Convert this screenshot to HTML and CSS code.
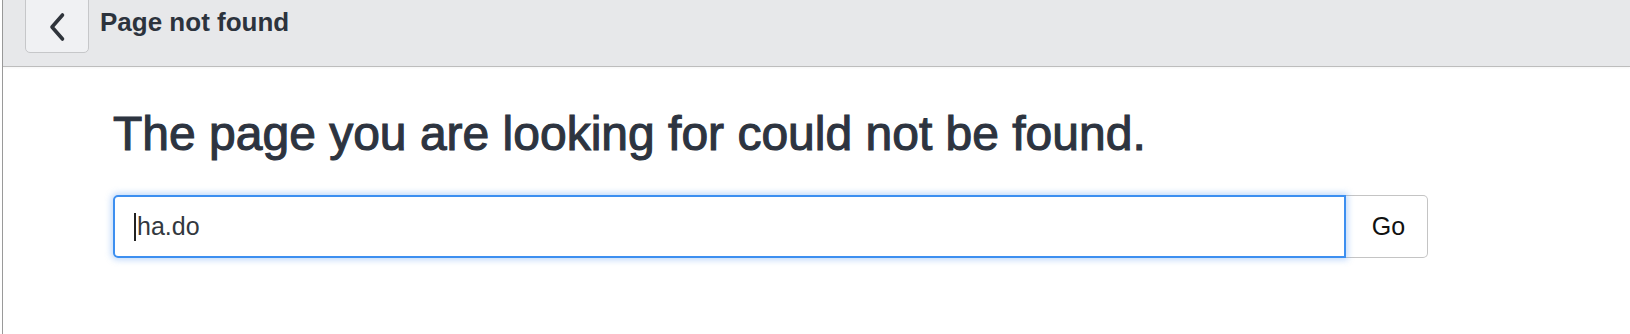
FILE: index.html
```html
<!DOCTYPE html>
<html>
<head>
<meta charset="utf-8">
<link rel="stylesheet" href="styles.css">
</head>
<body>
<div class="frame">
  <header class="topbar">
    <button class="back" aria-label="Back">
      <svg width="18" height="30" viewBox="0 0 18 30"><path d="M14.5 3 L4 15 L14.5 27" fill="none" stroke="#2f343b" stroke-width="3.6" stroke-linecap="round" stroke-linejoin="round"/></svg>
    </button>
    <span class="topbar-title">Page not found</span>
  </header>
  <main class="content">
    <h1 class="headline">The page you are looking for could not be found.</h1>
    <form class="search">
      <div class="search-field"><span class="caret"></span>ha.do</div>
      <button type="button" class="go">Go</button>
    </form>
  </main>
</div>
</body>
</html>
```
FILE: styles.css
```css
html, body {
  margin: 0;
  padding: 0;
  background: #fff;
  font-family: "Liberation Sans", Arial, sans-serif;
}
.frame {
  margin-left: 2px;
  border-left: 1px solid #9a9a9a;
  height: 334px;
  box-sizing: border-box;
}
.topbar {
  height: 66px;
  background: #e7e8ea;
  border-bottom: 1px solid #bdbdbd;
  box-shadow: 0 1px 2px rgba(0,0,0,0.04);
  display: flex;
  align-items: flex-start;
}
.back {
  margin-left: 22px;
  margin-top: -8px;
  width: 64px;
  height: 61px;
  background: #f0f1f3;
  border: 1px solid #c6c7c9;
  border-radius: 5px;
  display: flex;
  align-items: center;
  justify-content: center;
  padding: 8px 0 0 0;
  box-sizing: border-box;
}
.topbar-title {
  margin-left: 11px;
  margin-top: 8px;
  font-size: 26px;
  font-weight: bold;
  color: #2c333d;
  line-height: 29px;
}
.content {
  padding-left: 110px;
  width: 1315px;
}
.headline {
  margin: 40px 0 0 0;
  font-size: 48px;
  line-height: 53px;
  font-weight: normal;
  color: #2d3440;
  -webkit-text-stroke: 1.1px #2d3440;
  letter-spacing: 0;
}
.search {
  margin-top: 35px;
  display: flex;
  height: 63px;
}
.search-field {
  flex: 1;
  border: 2px solid #3d8ff0;
  border-radius: 5px 0 0 5px;
  box-shadow: 0 0 6px 2px rgba(80,150,240,0.35);
  display: flex;
  align-items: center;
  padding-left: 18px;
  font-size: 25px;
  color: #33383e;
  box-sizing: border-box;
  position: relative;
  z-index: 1;
}
.caret {
  display: inline-block;
  width: 2px;
  height: 28px;
  background: #222;
  margin-right: 1px;
  margin-left: 1px;
}
.go {
  width: 82px;
  border: 1px solid #c4c4c4;
  border-left: none;
  border-radius: 0 5px 5px 0;
  background: #fff;
  font-family: "Liberation Sans", Arial, sans-serif;
  font-size: 25px;
  color: #111;
  padding: 0 0 0 4px;
}
```
